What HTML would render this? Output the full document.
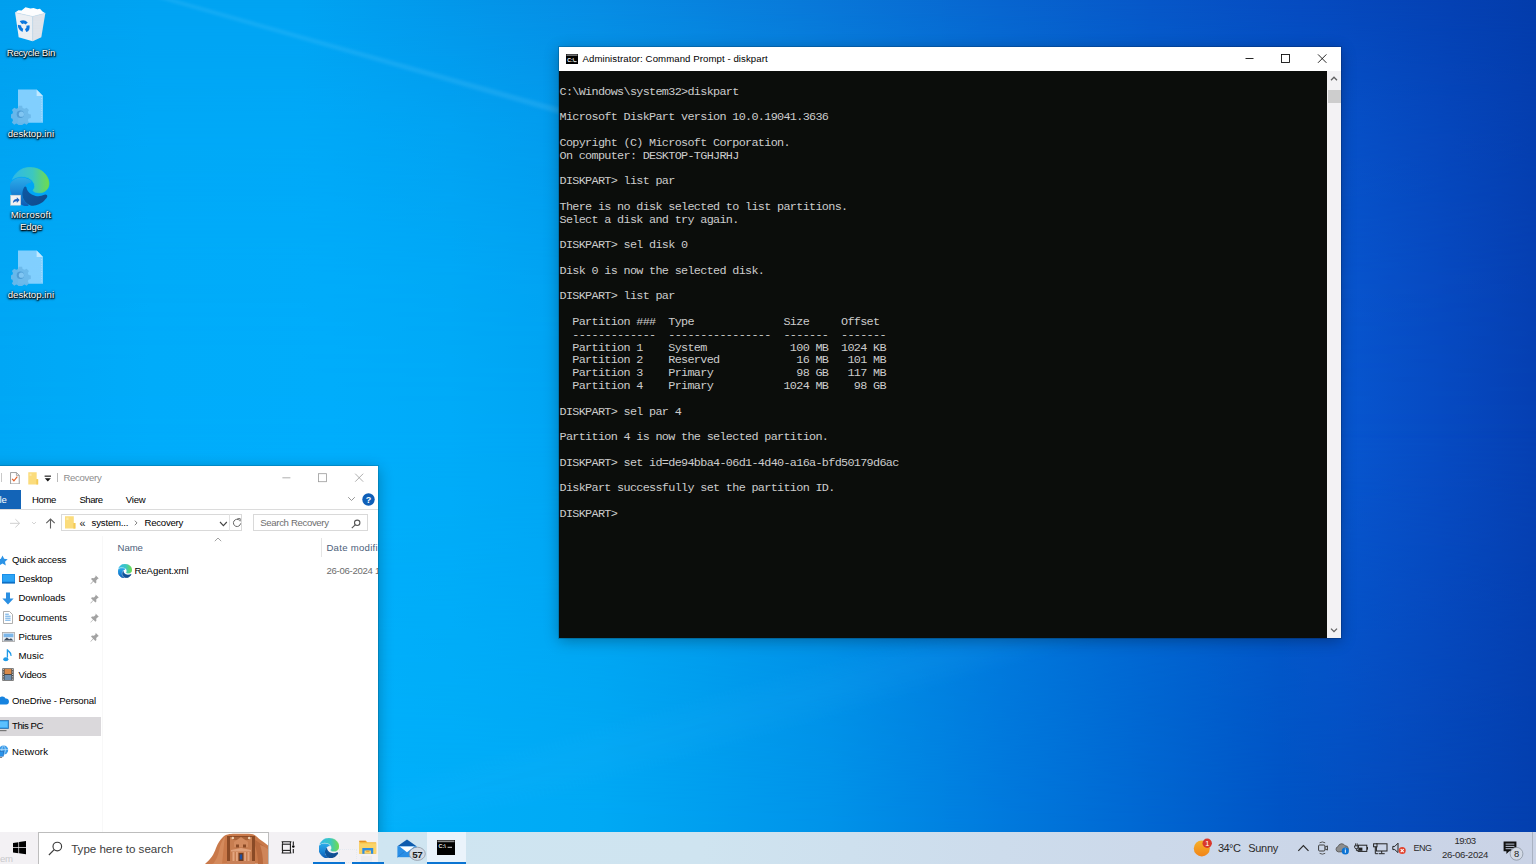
<!DOCTYPE html>
<html lang="en">
<head>
<meta charset="utf-8">
<title>Desktop</title>
<style>
html,body{margin:0;padding:0;width:1536px;height:864px;overflow:hidden}
body{position:relative;font-family:"Liberation Sans",sans-serif;color:#000;
 background:#0078d7;
}
.abs{position:absolute}
#wall{position:absolute;left:0;top:0;width:1536px;height:864px}

/* ---------- desktop icons ---------- */
.dicon{position:absolute;left:.9px;width:60px;text-align:center;color:#fff;font-size:9.6px;line-height:12.8px;letter-spacing:-.2px;
 text-shadow:0 1px 2px rgba(0,0,0,1),0 0 2px rgba(0,0,0,.9),1px 1px 1px rgba(0,0,0,.8),0 1px 3px rgba(0,0,0,.5)}
.dicon svg{display:block;margin:0 auto}
.dicon .l{display:inline-block;white-space:pre}

/* ---------- cmd window ---------- */
#cmd{position:absolute;left:559px;top:47px;width:782px;height:591px;background:#0b0d0b;box-shadow:0 3px 14px rgba(0,0,0,.3),0 0 0 1px rgba(0,0,0,.16)}
#cmd .tb{position:absolute;left:0;top:0;width:782px;height:24px;background:#fff}
#cmd .ttl{position:absolute;left:23.5px;top:5.5px;font-size:9.6px;line-height:12px;letter-spacing:.085px;color:#000;white-space:pre}
#cmd pre{position:absolute;left:.5px;top:25.9px;margin:0;font-family:"Liberation Mono",monospace;font-size:11.8px;line-height:12.8px;letter-spacing:-.681px;color:#ccc;white-space:pre}
#cmd .sb{position:absolute;left:768px;top:24px;width:14px;height:567px;background:#f3f2f4}
#cmd .th{position:absolute;left:768.5px;top:43px;width:13px;height:13px;background:#cdcdcd}

/* ---------- explorer ---------- */
#exp{position:absolute;left:-30px;top:466px;width:408px;height:398px;background:#fff;box-shadow:0 3px 14px rgba(0,0,0,.3),0 0 0 1px rgba(0,0,0,.12);font-size:9.6px;letter-spacing:-.2px;overflow:hidden}
#exp .in{position:absolute;left:30px;top:0;width:378px;height:398px}
.t{position:absolute;white-space:pre;line-height:12px}

/* ---------- taskbar ---------- */
#tb{position:absolute;left:0;top:832px;width:1536px;height:32px;
 background:linear-gradient(90deg,#f3f1f4 0,#f3f1f4 378px,#cfe5f1 378px,#cfe4f0 700px,#cddcec 1000px,#cbd6e8 1300px,#cad3e6 1536px)}
</style>
</head>
<body>
<svg width="0" height="0" style="position:absolute">
 <defs>
  <linearGradient id="egT" x1="0" y1="0" x2="1" y2="0"><stop offset="0" stop-color="#2fb8e8"/><stop offset=".55" stop-color="#3cc7c0"/><stop offset="1" stop-color="#6fdc4c"/></linearGradient>
  <linearGradient id="egL" x1="0" y1="0" x2="0" y2="1"><stop offset="0" stop-color="#2aa9e8"/><stop offset=".5" stop-color="#1a86d6"/><stop offset="1" stop-color="#0f5cb4"/></linearGradient>
  <linearGradient id="egB" x1="0" y1="0" x2="1" y2="1"><stop offset="0" stop-color="#0c59a4"/><stop offset="1" stop-color="#114a8b"/></linearGradient>
  <path id="edgeA" fill="url(#egB)" stroke="url(#egB)" stroke-width="1.500" stroke-linejoin="round" d="M21.86 17.86q.14 0 .25.12.1.13.1.25t-.11.33l-.32.46-.43.53-.44.5q-.21.25-.38.42l-.22.23q-.58.53-1.34 1.04-.76.51-1.6.91-.86.4-1.74.64t-1.67.24q-.9 0-1.69-.28-.8-.28-1.48-.78-.68-.5-1.22-1.17-.53-.66-.92-1.44-.38-.77-.58-1.6-.2-.83-.2-1.67 0-1 .32-1.96.33-.97.87-1.8.14.95.55 1.77.41.82 1.02 1.5.6.68 1.38 1.21.78.54 1.64.9.86.36 1.77.56.92.2 1.8.2 1.12 0 2.18-.24 1.06-.23 2.06-.72l.2-.1.2-.05z"/>
  <path id="edgeB" fill="url(#egL)" stroke="url(#egL)" stroke-width="1.500" stroke-linejoin="round" d="M6.36 16.59q0 1.1.27 2.15.27 1.06.78 2.03.51.96 1.24 1.77.74.82 1.66 1.4-1.47-.2-2.8-.74-1.33-.55-2.48-1.37-1.15-.83-2.08-1.9-.92-1.07-1.58-2.33T.36 14.94Q0 13.54 0 12.06q0-.81.32-1.49.31-.68.83-1.23.53-.55 1.2-.96.66-.4 1.35-.66.74-.27 1.5-.39.78-.12 1.55-.12.7 0 1.42.1.72.12 1.4.35.68.23 1.32.57.63.35 1.16.83-.35 0-.7.07-.33.07-.65.23v-.02q-.63.28-1.2.74-.57.46-1.05 1.04-.48.58-.87 1.26-.38.67-.65 1.39-.27.71-.42 1.44-.15.72-.15 1.38z"/>
  <path id="edgeC" fill="url(#egT)" stroke="url(#egT)" stroke-width=".500" stroke-linejoin="round" d="M11.96.06q1.7 0 3.33.39 1.63.38 3.07 1.15 1.43.77 2.62 1.93 1.18 1.16 1.98 2.7.49.94.76 1.96.28 1 .28 2.08 0 .89-.23 1.7-.24.8-.69 1.48-.45.68-1.1 1.22-.64.53-1.45.88-.54.24-1.11.36-.58.13-1.16.13-.42 0-.97-.03-.54-.03-1.1-.12-.55-.1-1.05-.28-.5-.19-.84-.5-.12-.09-.23-.24-.1-.16-.1-.33 0-.15.16-.35.16-.2.35-.5.2-.28.36-.68.16-.4.16-.95 0-1.06-.4-1.96-.4-.91-1.06-1.64-.66-.74-1.52-1.28-.86-.55-1.79-.89-.84-.3-1.72-.44-.87-.14-1.76-.14-1.55 0-3.06.45T.94 7.55q.71-1.74 1.81-3.13 1.1-1.38 2.52-2.35Q6.68 1.1 8.37.58q1.7-.52 3.58-.52z"/>
 </defs>
</svg>
<div id="wall">
 <div class="abs" style="left:0;top:0;width:1536px;height:864px;background:linear-gradient(90deg,#00a8f6 0px,#00adfb 150px,#00aefc 330px,#00acf9 450px,#00a7f5 540px,#009cec 700px,#008fe6 830px,#0078dc 1000px,#0068d3 1130px,#045acc 1280px,#0857d1 1341px,#074bc3 1440px,#0640b3 1536px)"></div>
 <div class="abs" style="left:0;top:0;width:1536px;height:440px;background:linear-gradient(90deg,#009fee 0px,#00a3f2 150px,#00a3f2 300px,#0297ea 450px,#068ce3 600px,#0879d9 800px,#0765cf 1000px,#0657c8 1150px,#054bc0 1300px,#0441b3 1450px,#033cab 1536px);-webkit-mask-image:linear-gradient(180deg,#000 0%,rgba(0,0,0,.45) 28%,rgba(0,0,0,.14) 62%,transparent 100%);mask-image:linear-gradient(180deg,#000 0%,rgba(0,0,0,.45) 28%,rgba(0,0,0,.14) 62%,transparent 100%)"></div>
 <div class="abs" style="left:0;top:430px;width:1536px;height:434px;background:linear-gradient(90deg,#00a9f4 0px,#00b0fa 380px,#00a9f4 600px,#0093e9 830px,#007add 1000px,#0069d3 1130px,#0054c5 1280px,#044abc 1400px,#033fae 1536px);-webkit-mask-image:linear-gradient(0deg,#000 0%,#000 8%,rgba(0,0,0,.6) 45%,transparent 100%);mask-image:linear-gradient(0deg,#000 0%,#000 8%,rgba(0,0,0,.6) 45%,transparent 100%)"></div>
 <svg class="abs" style="left:0;top:0" width="1536" height="864" viewBox="0 0 1536 864">
  <defs>
   <filter id="bl" x="-10%" y="-10%" width="120%" height="120%"><feGaussianBlur stdDeviation="1.6"/></filter>
   <filter id="bl2" x="-10%" y="-10%" width="120%" height="120%"><feGaussianBlur stdDeviation="8"/></filter>
  </defs>
  <polygon points="162,-4 560,108 560,114 150,-4" fill="#8fdcff" opacity=".15" filter="url(#bl)"/>
  <polygon points="380,792 560,742 1000,622 1341,520 1341,560 1000,660 560,790 380,832" fill="#38b8ff" opacity=".07" filter="url(#bl2)"/>
 </svg>
</div>

<!-- ======= DESKTOP ICONS ======= -->
<div class="dicon" style="top:5px">
 <svg width="34" height="38" viewBox="0 0 34 38" style="margin-left:12.100px">
  <defs><pattern id="mesh" width="1.600" height="1.600" patternUnits="userSpaceOnUse"><rect width="1.600" height="1.600" fill="none"/><circle cx=".8" cy=".8" r=".42" fill="#b9c6d3" fill-opacity=".55"/></pattern></defs>
  <path d="M2.100 7.600L19.700 11.500 19.700 36.300 5.700 32.300z" fill="#f1f4f7"/>
  <path d="M19.700 11.500L32.300 8.300 28.300 32.300 19.700 36.300z" fill="#e1e6ec"/>
  <path d="M2.100 7.600L19.700 11.500 19.700 36.300 5.700 32.300zM19.700 11.500L32.300 8.300 28.300 32.300 19.700 36.300z" fill="url(#mesh)"/>
  <path d="M2.100 7.600L5.500 5.200 8.600 5.600 12.500 2.200 17.500 3.600 20.500 3 24.300 4.300 27 3.800 29.500 6.400 32.300 8.300 19.700 11.500z" fill="#fcfdfe"/>
  <path d="M2.100 7.600L19.700 11.500 32.300 8.300" fill="none" stroke="#d6dde5" stroke-width=".7"/>
  <path d="M19.700 11.500V36" stroke="#d3dae2" stroke-width=".6"/>
  <g transform="translate(10.800 21.300) skewY(9)" fill="none" stroke="#0b76de" stroke-width="3.300"><circle r="4.300" stroke-dasharray="6.200 2.800" transform="rotate(-20)"/></g>
 </svg>
 <div style="margin-top:3.500px;letter-spacing:-.2px">Recycle Bin</div>
</div>
<div class="dicon" style="top:88.500px">
 <svg width="38" height="36" viewBox="0 0 38 36" style="margin-left:10.100px"><path d="M7 .500h18.600l6.400 6.400v26.800H7z" fill="#8fd4ff" fill-opacity=".9"/><path d="M25.600.500v6.400h6.400z" fill="#c6eaff" fill-opacity=".92"/><path d="M30.600 9v23" stroke="#b2e1ff" stroke-width=".8" stroke-dasharray="1 1.400"/><g transform="translate(9.400 25.200) scale(1.120)"><path d="M-1.500-7.600h3l.5 2 1.700.8 1.800-1 2.100 2.100-1 1.800.7 1.700 2 .5v3l-2 .5-.7 1.700 1 1.800-2.100 2.100-1.800-1-1.700.7-.5 2h-3l-.5-2-1.700-.7-1.800 1-2.100-2.100 1-1.800-.7-1.700-2-.5v-3l2-.5.7-1.700-1-1.800 2.100-2.100 1.800 1 1.700-.8z" fill="#6cb8ea" fill-opacity=".95"/><circle r="3.300" fill="#4e9cd4"/><circle cx=".9" r="2.300" fill="#80c6f3"/></g></svg>
 <div style="margin-top:3.200px;letter-spacing:.05px">desktop.ini</div>
</div>
<div class="dicon" style="top:167px">
 <svg width="40" height="39" viewBox="0 0 40 39" style="margin-left:9.600px"><g transform="translate(1 .4) scale(1.580)"><use href="#edgeB"/><use href="#edgeA"/><use href="#edgeC"/></g><rect x=".700" y="28.200" width="10" height="10" fill="#f2f2f2" stroke="#cfcfcf" stroke-width=".5"/><path d="M2.900 36q.2-3.800 3.900-4v-1.800l2.800 2.900-2.800 2.900v-1.700q-2.200-.1-3.900 1.700z" fill="#1b64c4"/></svg>
 <div style="margin-top:3.400px;line-height:12px"><span class="l" style="letter-spacing:.17px">Microsoft</span><br><span class="l" style="letter-spacing:-.1px">Edge</span></div>
</div>
<div class="dicon" style="top:250.300px">
 <svg width="38" height="36" viewBox="0 0 38 36" style="margin-left:10.100px"><path d="M7 .500h18.600l6.400 6.400v26.800H7z" fill="#8fd4ff" fill-opacity=".9"/><path d="M25.600.500v6.400h6.400z" fill="#c6eaff" fill-opacity=".92"/><path d="M30.600 9v23" stroke="#b2e1ff" stroke-width=".8" stroke-dasharray="1 1.400"/><g transform="translate(9.400 25.200) scale(1.120)"><path d="M-1.500-7.600h3l.5 2 1.700.8 1.800-1 2.100 2.100-1 1.800.7 1.700 2 .5v3l-2 .5-.7 1.700 1 1.800-2.100 2.100-1.800-1-1.700.7-.5 2h-3l-.5-2-1.700-.7-1.800 1-2.100-2.100 1-1.800-.7-1.700-2-.5v-3l2-.5.7-1.700-1-1.800 2.100-2.100 1.800 1 1.700-.8z" fill="#6cb8ea" fill-opacity=".95"/><circle r="3.300" fill="#4e9cd4"/><circle cx=".9" r="2.300" fill="#80c6f3"/></g></svg>
 <div style="margin-top:3.200px;letter-spacing:.05px">desktop.ini</div>
</div>

<!-- ======= CMD WINDOW ======= -->
<div id="cmd">
 <div class="tb"></div>
 <svg class="abs" style="left:7px;top:7px" width="12" height="10" viewBox="0 0 12 10"><rect width="12" height="10" fill="#000"/><rect x=".5" y=".5" width="11" height="1.2" fill="#9a9a9a"/><text x="1.2" y="7.6" font-family="Liberation Sans,sans-serif" font-size="5.2" font-weight="bold" fill="#fff">C:\</text><rect x="8" y="7.2" width="2.6" height=".9" fill="#fff"/></svg>
 <div class="ttl">Administrator: Command Prompt - diskpart</div>
 <svg class="abs" style="left:676px;top:0" width="106" height="24" viewBox="0 0 106 24" fill="none" stroke="#000" stroke-width=".85">
  <path d="M10.5 11.5h8"/>
  <rect x="46.5" y="7.5" width="8" height="8"/>
  <path d="M83 7.4l8.4 8.4M91.4 7.4L83 15.8"/>
 </svg>
 <pre>

C:\Windows\system32&gt;diskpart

Microsoft DiskPart version 10.0.19041.3636

Copyright (C) Microsoft Corporation.
On computer: DESKTOP-TGHJRHJ

DISKPART&gt; list par

There is no disk selected to list partitions.
Select a disk and try again.

DISKPART&gt; sel disk 0

Disk 0 is now the selected disk.

DISKPART&gt; list par

  Partition ###  Type              Size     Offset
  -------------  ----------------  -------  -------
  Partition 1    System             100 MB  1024 KB
  Partition 2    Reserved            16 MB   101 MB
  Partition 3    Primary             98 GB   117 MB
  Partition 4    Primary           1024 MB    98 GB

DISKPART&gt; sel par 4

Partition 4 is now the selected partition.

DISKPART&gt; set id=de94bba4-06d1-4d40-a16a-bfd50179d6ac

DiskPart successfully set the partition ID.

DISKPART&gt; </pre>
 <div class="sb"></div><div class="th"></div>
 <svg class="abs" style="left:768px;top:24px" width="14" height="567" viewBox="0 0 14 567" fill="none" stroke="#606060" stroke-width="1.3"><path d="M4 9.2l3-3 3 3"/><path d="M4 557.6l3 3 3-3"/></svg>
</div>

<!-- ======= EXPLORER ======= -->
<div id="exp"><div class="in">
 <!-- title bar -->
 <div class="abs" style="left:1px;top:6.5px;width:1px;height:9.5px;background:#c9c9c9"></div>
 <svg class="abs" style="left:10.200px;top:5.800px" width="9.800" height="12.500" viewBox="0 0 11 14"><path d="M.6.6h6.6l3.2 3.2v9.6H.6z" fill="#fff" stroke="#8a8a8a" stroke-width=".9"/><path d="M7.2.6v3.2h3.2" fill="none" stroke="#8a8a8a" stroke-width=".8"/><path d="M2.4 7.6l2 2.2 3.8-4.6" fill="none" stroke="#e2602a" stroke-width="1.3"/></svg>
 <svg class="abs" style="left:28px;top:5.800px" width="10.600" height="12.800" viewBox="0 0 11 14"><path d="M0 .4h9.200v7.400h1.600v5.800H0z" fill="#fbdc7c"/><path d="M1.400 1.800h2.200v2.400H1.400z" fill="#fdeaa8"/><path d="M8.800 7.800h2v5.800h-2z" fill="#f4cb58"/></svg>
 <svg class="abs" style="left:44px;top:9px" width="8" height="8" viewBox="0 0 8 8"><rect x=".6" y=".6" width="6.4" height="1.1" fill="#111"/><path d="M.8 3.2h6L3.8 6.4z" fill="#111"/></svg>
 <div class="abs" style="left:57px;top:6.5px;width:1px;height:9.5px;background:#b9b9b9"></div>
 <div class="t" style="left:63.4px;top:6.3px;color:#8d8d8d;letter-spacing:-.3px">Recovery</div>
 <svg class="abs" style="left:270px;top:0" width="108" height="24" viewBox="0 0 108 24" fill="none" stroke="#9a9a9a" stroke-width=".8"><path d="M12.4 11.8h8"/><rect x="48.4" y="7.7" width="8" height="8"/><path d="M85.2 7.7l8 8M93.2 7.7l-8 8"/></svg>
 <!-- ribbon tabs -->
 <div class="abs" style="left:-24px;top:24.2px;width:44.8px;height:18.6px;background:#1364b7"></div>
 <div class="t" style="left:-8px;top:27.5px;color:#fff">File</div>
 <div class="t" style="left:32px;top:27.5px;letter-spacing:-0.4px">Home</div>
 <div class="t" style="left:79.4px;top:27.5px;letter-spacing:-.5px">Share</div>
 <div class="t" style="left:125.7px;top:27.5px;letter-spacing:-0.17px">View</div>
 <svg class="abs" style="left:347px;top:30px" width="9" height="6" viewBox="0 0 9 6" fill="none" stroke="#8a8a8a" stroke-width=".9"><path d="M1.2 1.2l3.3 3.3 3.3-3.3"/></svg>
 <svg class="abs" style="left:362px;top:26.6px" width="13" height="13" viewBox="0 0 13 13"><circle cx="6.5" cy="6.5" r="6.2" fill="#0f5fb8"/><text x="6.5" y="9.8" text-anchor="middle" font-family="Liberation Sans,sans-serif" font-weight="bold" font-size="9" fill="#fff">?</text></svg>
 <div class="abs" style="left:0;top:43.4px;width:378px;height:1px;background:#dcdcdc"></div>
 <!-- address row -->
 <svg class="abs" style="left:9px;top:51px" width="50" height="13" viewBox="0 0 50 13" fill="none"><path d="M1 6.3h9.4M6.4 2.2l4.2 4.1-4.2 4.1" stroke="#cfcfcf" stroke-width="1"/><path d="M23 5l2 2 2-2" stroke="#cfcfcf" stroke-width=".9"/><path d="M41.5 11.5v-9.4M37.3 6.2l4.2-4.2 4.2 4.2" stroke="#5f5f5f" stroke-width="1.1"/></svg>
 <div class="abs" style="left:61px;top:48.3px;width:181px;height:16.4px;border:1px solid #d9d9d9;box-sizing:border-box"></div>
 <div class="abs" style="left:229px;top:48.3px;width:1px;height:16.4px;background:#e2e2e2"></div>
 <svg class="abs" style="left:64.8px;top:50.2px" width="11" height="13" viewBox="0 0 11 13"><path d="M0 .2h8.800v6.800h1.600v5.600H0z" fill="#fbdc7c"/><path d="M1.300 1.600h2.200v2.400H1.300z" fill="#fdeaa8"/><path d="M8.400 7h2v5.600h-2z" fill="#f4cb58"/></svg>
 <div class="t" style="left:79.400px;top:50.600px;color:#222;font-size:10.800px;letter-spacing:0">«</div>
 <div class="t" style="left:91.5px;top:51.4px;letter-spacing:-0.17px">system...</div>
 <svg class="abs" style="left:133.600px;top:54.200px" width="4.200" height="5.900" viewBox="0 0 5 7" fill="none" stroke="#777" stroke-width="1.100"><path d="M1 .8l2.6 2.7L1 6.2"/></svg>
 <div class="t" style="left:144.6px;top:51.4px;letter-spacing:-.26px">Recovery</div>
 <svg class="abs" style="left:219px;top:54.6px" width="9" height="6" viewBox="0 0 9 6" fill="none" stroke="#444" stroke-width="1.1"><path d="M1 1l3.4 3.6L7.8 1"/></svg>
 <svg class="abs" style="left:232px;top:52.3px" width="10" height="10" viewBox="0 0 10 10" fill="none" stroke="#666" stroke-width="1"><path d="M7.6 2.4A3.6 3.6 0 1 0 8.6 5.4"/><path d="M5.4.6h2.8v2.8" stroke-width=".9"/></svg>
 <div class="abs" style="left:253.2px;top:48.3px;width:114.6px;height:16.4px;border:1px solid #d9d9d9;box-sizing:border-box"></div>
 <div class="t" style="left:260.3px;top:51.4px;color:#6e6e6e;letter-spacing:-0.35px">Search Recovery</div>
 <svg class="abs" style="left:351px;top:52.6px" width="10" height="10" viewBox="0 0 10 10" fill="none" stroke="#555" stroke-width="1.1"><circle cx="6.2" cy="3.8" r="2.7"/><path d="M4.2 5.8L.8 9.2"/></svg>
 <!-- nav pane -->
 <div class="abs" style="left:102.4px;top:70px;width:1px;height:300px;background:#f8f8f8"></div>
 <svg class="abs" style="left:-3px;top:88.5px" width="11" height="11" viewBox="0 0 11 11"><path d="M5.5.4l1.6 3.4 3.6.4-2.7 2.5.8 3.7-3.3-1.9-3.3 1.9.8-3.7L.3 4.2l3.6-.4z" fill="#2b93e6"/></svg>
 <div class="t" style="left:12px;top:88px;letter-spacing:-0.25px">Quick access</div>

 <svg class="abs" style="left:1.5px;top:108.3px" width="13" height="10" viewBox="0 0 13 10"><rect width="13" height="9" fill="#1b8fe8"/><rect y="8" width="13" height="1.6" fill="#0f6fc4"/><rect x="1" y="1" width="11" height="6.4" fill="#2ca4f5"/></svg>
 <div class="t" style="left:18.5px;top:107.2px;letter-spacing:-0.19px">Desktop</div>
 <svg class="abs" style="left:2px;top:126px" width="12" height="13" viewBox="0 0 12 13"><path d="M4 .4h4v6h3.6L6 12.4.4 6.4H4z" fill="#2a8fe2"/></svg>
 <div class="t" style="left:18.5px;top:126.4px;letter-spacing:-0.07px">Downloads</div>
 <svg class="abs" style="left:3px;top:144.6px" width="10" height="13" viewBox="0 0 10 13"><path d="M.5.5h6l3 3v9h-9z" fill="#fff" stroke="#9a9a9a" stroke-width=".8"/><path d="M2.2 3.2h3.6M2.2 5.2h5.4M2.2 7.2h5.4M2.2 9.2h5.4" stroke="#4b9ae0" stroke-width=".9"/></svg>
 <div class="t" style="left:18.5px;top:145.6px;letter-spacing:0px">Documents</div>
 <svg class="abs" style="left:1.5px;top:165.6px" width="13" height="10" viewBox="0 0 13 10"><rect x=".4" y=".4" width="12.2" height="9.2" fill="#e9eef3" stroke="#a7a7a7" stroke-width=".8"/><rect x="1.6" y="1.6" width="9.8" height="3.6" fill="#7ab6ea"/><path d="M1.6 8.4l3.2-3 2.4 1.8 1.8-1 2.4 2.2z" fill="#3f4d5e"/></svg>
 <div class="t" style="left:18.5px;top:164.8px;letter-spacing:-0.16px">Pictures</div>
 <svg class="abs" style="left:3px;top:183.2px" width="10" height="13" viewBox="0 0 10 13"><path d="M4.4.4v8.2" stroke="#1f9be8" stroke-width="1.3" fill="none"/><path d="M4.4.6c.6 2.2 4.4 2.6 3.6 6.2" stroke="#1f9be8" stroke-width="1.4" fill="none"/><ellipse cx="2.8" cy="10.2" rx="2.6" ry="2" fill="#1f9be8"/></svg>
 <div class="t" style="left:18.5px;top:184px;letter-spacing:0.06px">Music</div>
 <svg class="abs" style="left:2px;top:202.4px" width="12" height="13" viewBox="0 0 12 13"><rect x=".3" y=".3" width="11.4" height="12.4" fill="#4a4a4a"/><rect x="2.6" y="1" width="6.8" height="5" fill="#d98a4a"/><rect x="2.6" y="7" width="6.8" height="5" fill="#6e8fb0"/><path d="M1.4 1v11M10.6 1v11" stroke="#d9d9d9" stroke-width=".9" stroke-dasharray="1.2 1.2"/></svg>
 <div class="t" style="left:18.5px;top:203.2px;letter-spacing:-0.23px">Videos</div>
 <svg class="abs" style="left:86.200px;top:106.400px" width="16" height="90" viewBox="0 0 16 90" fill="#a2a2a2"><g id="pin"><path d="M9.6 3.2l3.2 3.2-1 .4-1.6 1.6.2 2-1 1-2-2-2.6 2.8-.4-.4 2.6-2.8-2-2 1-1 2 .2 1.6-1.6z"/></g><use href="#pin" y="19.2"/><use href="#pin" y="38.4"/><use href="#pin" y="57.6"/></svg>

 <svg class="abs" style="left:-4px;top:230px" width="13" height="9" viewBox="0 0 13 9"><path d="M3.2 8.6a2.7 2.7 0 0 1-.4-5.3A3.6 3.6 0 0 1 9.6 2.6a3 3 0 0 1 .6 6z" fill="#1683df"/></svg>
 <div class="t" style="left:12px;top:229px;letter-spacing:-0.16px">OneDrive - Personal</div>
 <div class="abs" style="left:0;top:251px;width:101px;height:18.6px;background:#dad8db"></div>
 <svg class="abs" style="left:-4px;top:254px" width="13" height="12" viewBox="0 0 13 12"><rect x=".5" y=".5" width="12" height="8" fill="#35a3f0" stroke="#2b6fae" stroke-width=".8"/><rect x="1.6" y="1.6" width="9.8" height="5.6" fill="#5cc0ff"/><rect x="2.5" y="10" width="8" height="1.2" fill="#777"/></svg>
 <div class="t" style="left:12px;top:254.4px;letter-spacing:-0.44px">This PC</div>
 <svg class="abs" style="left:-4px;top:279px" width="13" height="13" viewBox="0 0 13 13"><circle cx="7.6" cy="5" r="4.6" fill="#3b9be8"/><path d="M3.2 4.6h8.8M7.6.6c-2.4 2.6-2.4 6.2 0 8.8M7.6.6c2.4 2.6 2.4 6.2 0 8.8" stroke="#bfe1fb" stroke-width=".7" fill="none"/><rect x="0" y="6.6" width="7.4" height="4.6" fill="#2a93ea" stroke="#1d66b3" stroke-width=".6"/><rect x="1.5" y="12" width="4.6" height=".9" fill="#777"/></svg>
 <div class="t" style="left:12px;top:280px;letter-spacing:0.13px">Network</div>

 <!-- content -->
 <div class="t" style="left:117.6px;top:76.2px;color:#4c607a;letter-spacing:-0.08px">Name</div>
 <svg class="abs" style="left:213.6px;top:71.4px" width="8" height="5" viewBox="0 0 8 5" fill="none" stroke="#8a8a8a" stroke-width=".8"><path d="M.8 4.2L4 1l3.2 3.2"/></svg>
 <div class="abs" style="left:321px;top:72px;width:1px;height:19px;background:#e5e5e5"></div>
 <div class="t" style="left:326.4px;top:76.2px;color:#4c607a;letter-spacing:.27px">Date modified</div>
 <svg class="abs" style="left:117.6px;top:98px" width="14" height="14" viewBox="0 0 24 24"><use href="#edgeB"/><use href="#edgeA"/><use href="#edgeC"/></svg>
 <div class="t" style="left:134.5px;top:99.4px;letter-spacing:-0.08px">ReAgent.xml</div>
 <div class="t" style="left:326.4px;top:99.4px;color:#6d6d6d;letter-spacing:-.29px">26-06-2024 19:03</div>
</div></div>

<!-- ======= TASKBAR ======= -->
<div id="tb">
 <!-- faint see-through bits of explorer status bar -->
 <div class="t" style="left:0;top:20.5px;font-size:9.6px;color:#c9c9cc;letter-spacing:-.3px">em</div>
 <div class="abs" style="left:339px;top:17px;width:18px;height:14px;border:1px dotted #e4eaf1;box-sizing:border-box"></div><div class="abs" style="left:361px;top:24px;width:11px;height:7px;background:#ebebef"></div>
 <!-- start -->
 <svg class="abs" style="left:12.6px;top:9.4px" width="13.2" height="13.2" viewBox="0 0 13.2 13.2" fill="#000"><path d="M0 1.9l5.4-.75v5.2H0zM6.1 1.05L13.2 0v6.35H6.1zM0 7h5.4v5.2L0 11.4zM6.1 7h7.1v6.2l-7.1-1z"/></svg>
 <!-- search box -->
 <div class="abs" style="left:38.4px;top:.4px;width:230.6px;height:31.6px;background:#fff;border:1px solid #bdbdbd;border-bottom:0;box-sizing:border-box;overflow:hidden">
  <svg class="abs" style="left:8.6px;top:8px" width="15" height="15" viewBox="0 0 15 15" fill="none" stroke="#3a3a3a" stroke-width="1.15"><circle cx="9.3" cy="5.5" r="4.3"/><path d="M6.2 8.7L.9 14"/></svg>
  <div class="t" style="left:31.8px;top:8.6px;font-size:11.6px;line-height:14px;color:#404040;letter-spacing:-.02px">Type here to search</div>
  <svg class="abs" style="left:165.400px;top:0" width="65" height="31" viewBox="0 0 65 31">
   <path d="M0 31C6 26 9 21 11 15c2-5 4-8 7-11C21 1.400 24 .800 30 .800h14c5 0 7 2 10 5 3 2.600 7 4 11 9v16z" fill="#c9794a"/>
   <path d="M20 3.400C17 7 15 12 14 18c-1 5-3 9-6 13h9c1-8 1.500-17 3-27.600z" fill="#d48a5c"/>
   <path d="M47 5c3 2 6 4 9 6 3 2 6 4 9 7v13H53c0-9-2-18-6-26z" fill="#b96a3e"/><path d="M55 12c2 6 3 12 3 19h7V18c-3-3-6-5-10-6z" fill="#cf8559"/>
   <path d="M22 3h28v25H22z" fill="#8a4a26"/>
   <path d="M25 4h22v24H25z" fill="#c77d50"/>
   <path d="M26 4h20l-2 3H28z" fill="#a86238"/>
   <path d="M29 9l7-5 7 5v5H29z" fill="#d38b5f"/>
   <rect x="31" y="11.500" width="3" height="3" fill="#8a4a26"/><rect x="38" y="11.500" width="3" height="3" fill="#8a4a26"/>
   <circle cx="27.800" cy="5" r="1.300" fill="#f0d2b4"/><circle cx="44.200" cy="5" r="1.300" fill="#f0d2b4"/>
   <path d="M26 17l10-2 10 2v1.600H26z" fill="#e0a27c"/>
   <path d="M27.500 19h2v9h-2zM31 19h1.800v9H31zM39.200 19H41v9h-1.800zM42.500 19h2v9h-2z" fill="#e3a57f"/>
   <rect x="33.600" y="20" width="4.800" height="8" fill="#6e3a1e"/><rect x="34.800" y="21.400" width="2.400" height="5" fill="#1f4f9e"/>
   <path d="M22 28h28v3H22z" fill="#c98158"/>
  </svg>
 </div>
 <!-- task view -->
 <svg class="abs" style="left:280.6px;top:9.400px" width="15" height="13" viewBox="0 0 15 13" fill="none" stroke="#1c1c1c" stroke-width="1.1"><rect x="1.400" y="3.200" width="8" height="6.200"/><path d="M.6.700h9.800M.6 12h9.800M1.600.700v2M9.400.700v2M1.600 10v2M9.400 10v2M12.300.400v3.600M12.300 8v4.200"/><circle cx="12.300" cy="5.400" r="1.250" fill="#000" stroke="none"/></svg>
 <!-- edge -->
 <svg class="abs" style="left:318.800px;top:5.700px" width="20" height="20" viewBox="0 0 24 24"><use href="#edgeB"/><use href="#edgeA"/><use href="#edgeC"/></svg>
 <div class="abs" style="left:312.900px;top:30.400px;width:32px;height:1.600px;background:#0a74d2"></div>
 <!-- explorer -->
 <svg class="abs" style="left:359px;top:8.400px" width="17.500" height="15" viewBox="0 0 17.500 15"><path d="M.3.800h6.600l1.400 1.500h8.900v11.500H.3z" fill="#f5b93c"/><path d="M.3.800h6.400v1.200H.3z" fill="#e58f24"/><path d="M.3 3.300h16.900v10.500H.3z" fill="#fbd468"/><path d="M3.300 8h10.900v5.800H3.300z" fill="#2f8de0"/><path d="M5.500 10.500h6.500v3.300H5.500z" fill="#fbd468"/><path d="M7.200 10.500h3.100v1.600H7.200z" fill="#f0a832"/></svg>
 <div class="abs" style="left:351.900px;top:30.400px;width:32.300px;height:1.600px;background:#0a74d2"></div>
 <!-- mail -->
 <svg class="abs" style="left:397.400px;top:6.600px" width="29" height="23" viewBox="0 0 29 23"><path d="M.4 7.200L10 .400l9.600 6.800z" fill="#0f5cae"/><path d="M.4 7.200h19.200v11H.4z" fill="#2a8fe6"/><path d="M2.600 7.600h14.800L10 13.200z" fill="#fff"/><path d="M.4 18.200l7-5.600M19.600 18.200l-7-5.600" stroke="#1f7ad2" stroke-width=".8"/><ellipse cx="20.300" cy="14.800" rx="8" ry="6.600" fill="#d3dbe6" stroke="#8e97a3" stroke-width=".8"/><text x="20.300" y="18.500" text-anchor="middle" font-family="Liberation Sans,sans-serif" font-weight="bold" font-size="9.800" letter-spacing="-.5" fill="#1b1b1b">57</text></svg>
 <!-- cmd (active) -->
 <div class="abs" style="left:427.200px;top:0;width:38.700px;height:32px;background:#eaf3fb"></div>
 <svg class="abs" style="left:436.800px;top:8px" width="18" height="15" viewBox="0 0 18 15"><rect width="18" height="15" fill="#000"/><rect x=".5" y=".5" width="17" height="1.700" fill="#8a8a8a"/><text x="1.600" y="7.600" font-family="Liberation Sans,sans-serif" font-weight="bold" font-size="5.400" fill="#e8e8e8">C:\</text><rect x="10.600" y="6.800" width="4.400" height="1" fill="#d0d0d0"/></svg>
 <div class="abs" style="left:427.200px;top:30.400px;width:38.700px;height:1.600px;background:#0a74d2"></div>

 <!-- weather -->
 <svg class="abs" style="left:1192.500px;top:5.800px" width="20" height="19" viewBox="0 0 20 19"><defs><linearGradient id="sun" x1="0" y1="0" x2="0" y2="1"><stop offset="0" stop-color="#f5b12a"/><stop offset="1" stop-color="#f28418"/></linearGradient></defs><circle cx="8.800" cy="10.400" r="8" fill="url(#sun)"/><circle cx="14.200" cy="5.200" r="4.700" fill="#d9372c"/><text x="14.200" y="8" text-anchor="middle" font-family="Liberation Sans,sans-serif" font-size="7.400" fill="#fff">1</text></svg>
 <div class="t" style="left:1218px;top:9.400px;font-size:11px;line-height:14px;color:#2b2b2b;letter-spacing:-.57px">34°C</div>
 <div class="t" style="left:1248.200px;top:9.400px;font-size:11px;line-height:14px;color:#2b2b2b;letter-spacing:-.26px">Sunny</div>
 <!-- tray -->
 <svg class="abs" style="left:1297px;top:11.600px" width="13" height="8" viewBox="0 0 13 8" fill="none" stroke="#2a2a2a" stroke-width="1.200"><path d="M1.300 6.800l5.100-5.200 5.100 5.200"/></svg>
 <svg class="abs" style="left:1316.500px;top:9px" width="12" height="14" viewBox="0 0 12 14" fill="none" stroke="#3a3a3a" stroke-width="1"><rect x="1.600" y="4" width="6.300" height="6" rx="1"/><path d="M7.900 6.200l2.500-1.300v4.200L7.900 7.800"/><path d="M2.600 1.800q2.800-1.700 5.600 0M2.600 12.300q2.800 1.700 5.600 0" stroke="#4a4a4a" stroke-width=".9"/></svg>
 <svg class="abs" style="left:1334.500px;top:10.600px" width="15" height="12" viewBox="0 0 15 12"><path d="M3.400 8.900a2.700 2.700 0 0 1-.3-5.300A3.700 3.700 0 0 1 10 2.800a3 3 0 0 1 1 5.900z" fill="#8d8d8d" stroke="#5a5a5a" stroke-width=".9"/><circle cx="10.300" cy="8" r="3.600" fill="#0b73d4"/><rect x="9.850" y="6.900" width=".9" height="2.900" fill="#fff"/><rect x="9.850" y="5.600" width=".9" height=".9" fill="#fff"/></svg>
 <svg class="abs" style="left:1353.600px;top:10.800px" width="14.500" height="10" viewBox="0 0 14.500 10" fill="none" stroke="#222" stroke-width="1"><rect x="4.200" y="2.200" width="8.600" height="6.200"/><rect x="13" y="4" width="1" height="2.600" fill="#222" stroke="none"/><rect x="5" y="4.600" width="3.400" height="3.200" fill="#222" stroke="none"/><path d="M1.600.400v2.200M3.200.400v2.200M.6 2.800h3.600v1.600q0 1.200-1.800 1.200T.6 4.400zM2.400 5.800v1.800h2" stroke-width=".9"/></svg>
 <svg class="abs" style="left:1372.600px;top:10.600px" width="15" height="12" viewBox="0 0 15 12" fill="none" stroke="#222" stroke-width="1"><rect x="3.400" y=".800" width="10.600" height="7.200"/><path d="M8.700 8v2.400M5.700 10.700h6"/><rect x=".600" y=".800" width="3.400" height="3" fill="#cbd6e8"/><path d="M2.300 3.800v6.900h2.600"/></svg>
 <svg class="abs" style="left:1392px;top:10.400px" width="15" height="13" viewBox="0 0 15 13"><path d="M.8 4.400h2L6 1.200v9.400L2.800 7.600h-2z" fill="none" stroke="#222" stroke-width="1"/><circle cx="10.200" cy="8.600" r="3.500" fill="#e2432e"/><path d="M8.700 7.100l3 3M11.700 7.100l-3 3" stroke="#fff" stroke-width="1.100"/></svg>
 <div class="t" style="left:1413.600px;top:9.600px;font-size:9px;line-height:12px;color:#2b2b2b;letter-spacing:-.5px">ENG</div>
 <div class="t" style="left:1445px;top:2.800px;width:40px;text-align:center;font-size:9.600px;line-height:12px;color:#2b2b2b;letter-spacing:-0.61px">19:03</div>
 <div class="t" style="left:1435px;top:17px;width:60px;text-align:center;font-size:9.600px;line-height:12px;color:#2b2b2b;letter-spacing:-0.32px">26-06-2024</div>
 <svg class="abs" style="left:1502.500px;top:9px" width="21" height="20" viewBox="0 0 21 20"><path d="M.6.500h12.800v9.800H6.200L3.400 13v-2.700H.6z" fill="#111"/><path d="M2.600 3.100h8.800M2.600 5.400h8.800M2.600 7.700h8.800" stroke="#cbd5e8" stroke-width=".9"/><circle cx="13.500" cy="12.800" r="6.400" fill="#d3dae6" stroke="#8c95a2" stroke-width=".8"/><text x="13.500" y="16.200" text-anchor="middle" font-family="Liberation Sans,sans-serif" font-size="9.400" fill="#222">8</text></svg>
 <div class="abs" style="left:1532px;top:0;width:1px;height:32px;background:#aab3c2"></div>
</div>
</body>
</html>
